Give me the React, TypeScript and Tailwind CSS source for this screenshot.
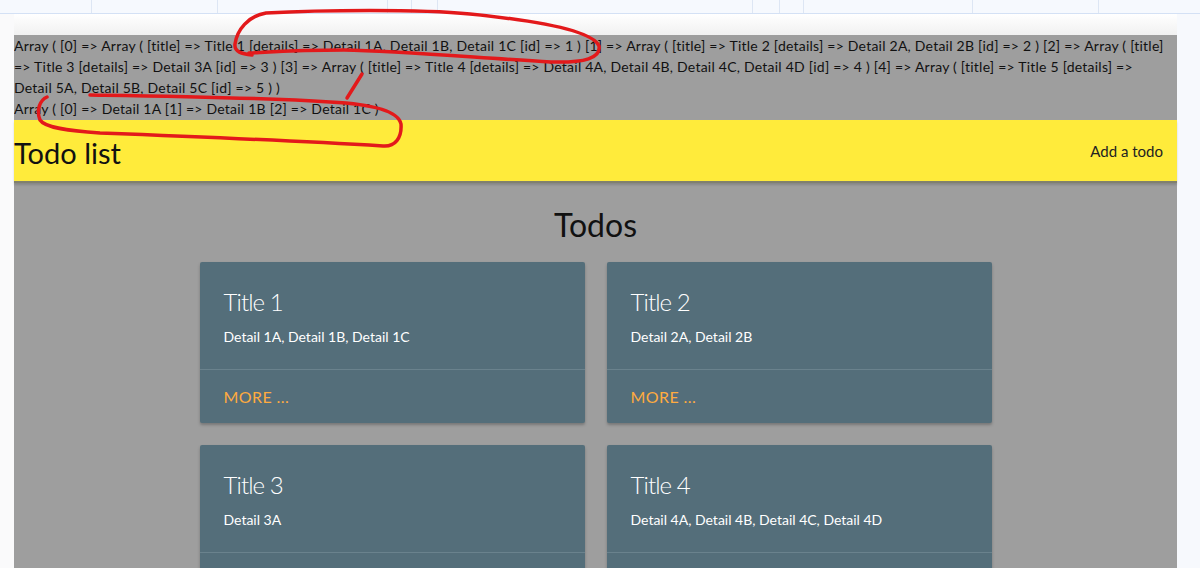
import React from "react";

const cells = [92, 126, 170, 24, 26, 315, 27, 24, 169, 126];

const todos = [
  { title: "Title 1", details: "Detail 1A, Detail 1B, Detail 1C" },
  { title: "Title 2", details: "Detail 2A, Detail 2B" },
  { title: "Title 3", details: "Detail 3A" },
  { title: "Title 4", details: "Detail 4A, Detail 4B, Detail 4C, Detail 4D" },
];

export default function App() {
  return (
    <div
      className="relative w-[1200px] h-[568px] overflow-hidden bg-[#f8f9fd]"
      style={{ fontFamily: "Lato, 'Noto Sans', sans-serif" }}
    >
      {/* top strip */}
      <div className="flex h-[14px] bg-[#f6f9fe] border-b border-[#d4e1f5]">
        {cells.map((w, i) => (
          <div key={i} className="h-full border-r border-[#dde6f4]" style={{ width: w }} />
        ))}
        <div className="flex-1" />
      </div>
      <div className="flex">
        <div className="w-[14px] bg-[#fafafb]" />
        <div className="w-[1163px]">
          <div className="h-[21px] bg-gradient-to-b from-white to-[#f1f1f1]" />
          <div className="bg-[#9e9e9e] text-[#111] text-[14px] leading-[21px] tracking-[0.23px] whitespace-nowrap h-[85px] overflow-hidden">
            <div>Array ( [0] =&gt; Array ( [title] =&gt; Title 1 [details] =&gt; Detail 1A, Detail 1B, Detail 1C [id] =&gt; 1 ) [1] =&gt; Array ( [title] =&gt; Title 2 [details] =&gt; Detail 2A, Detail 2B [id] =&gt; 2 ) [2] =&gt; Array ( [title]</div>
            <div>=&gt; Title 3 [details] =&gt; Detail 3A [id] =&gt; 3 ) [3] =&gt; Array ( [title] =&gt; Title 4 [details] =&gt; Detail 4A, Detail 4B, Detail 4C, Detail 4D [id] =&gt; 4 ) [4] =&gt; Array ( [title] =&gt; Title 5 [details] =&gt;</div>
            <div>Detail 5A, Detail 5B, Detail 5C [id] =&gt; 5 ) )</div>
            <div>Array ( [0] =&gt; Detail 1A [1] =&gt; Detail 1B [2] =&gt; Detail 1C )</div>
          </div>
          <div className="h-[63px] bg-[#ffeb3b] flex items-center justify-between pr-[14px] border-b-2 border-[#80806e] shadow-[0_2px_2px_rgba(0,0,0,0.15)] relative z-10">
            <div className="text-[29px] text-[#111] leading-none pt-[4px]">Todo list</div>
            <div className="text-[15px] text-[#222] pt-[2px]">Add a todo</div>
          </div>
          <div className="bg-[#9e9e9e] h-[400px] flex flex-col items-center">
            <div className="text-[32px] text-[#111] leading-[32px] pt-[26px] pb-[21px]">Todos</div>
            <div className="grid grid-cols-2 gap-[22px] w-[792px]">
              {todos.map((t) => (
                <div key={t.title} className="bg-[#546e7a] rounded-[2px] shadow-[0_2px_3px_rgba(0,0,0,0.25)]">
                  <div className="px-6 pt-6 h-[108px] border-b border-[#6a828d]">
                    <div className="text-[24px] font-light text-white leading-8 tracking-[-0.9px]">{t.title}</div>
                    <div className="text-[14px] text-white mt-[8px]">{t.details}</div>
                  </div>
                  <div className="px-6 h-[53px] flex items-center text-[16px] tracking-[0.4px] text-[#ffab40]">MORE ...</div>
                </div>
              ))}
            </div>
          </div>
        </div>
        <div className="flex-1 bg-[#f7f9fd]" />
      </div>

      {/* red annotations */}
      <svg className="absolute inset-0 z-20 pointer-events-none" width="1200" height="568" viewBox="0 0 1200 568">
        <g fill="none" stroke="#e3191b" strokeWidth="3.5" strokeLinecap="round" strokeLinejoin="round">
          <path d="M252 55 C 242 54, 234 52, 235 44 C 237 30, 248 16, 266 13 C 320 10, 420 9, 470 14 C 530 20, 592 30, 599 46 C 601 58, 585 63, 551 62 C 480 58, 400 51, 344 50 C 300 50, 270 52, 249 53" />
          <path d="M362 74 L 347 98" />
          <path d="M90 95 C 160 96, 250 97, 330 102 C 370 104, 398 110, 401 124 C 402 138, 395 147, 383 146 C 333 143, 233 138, 100 133 C 70 131, 45 128, 40 120 C 36 110, 40 100, 47 97" />
        </g>
      </svg>
    </div>
  );
}
